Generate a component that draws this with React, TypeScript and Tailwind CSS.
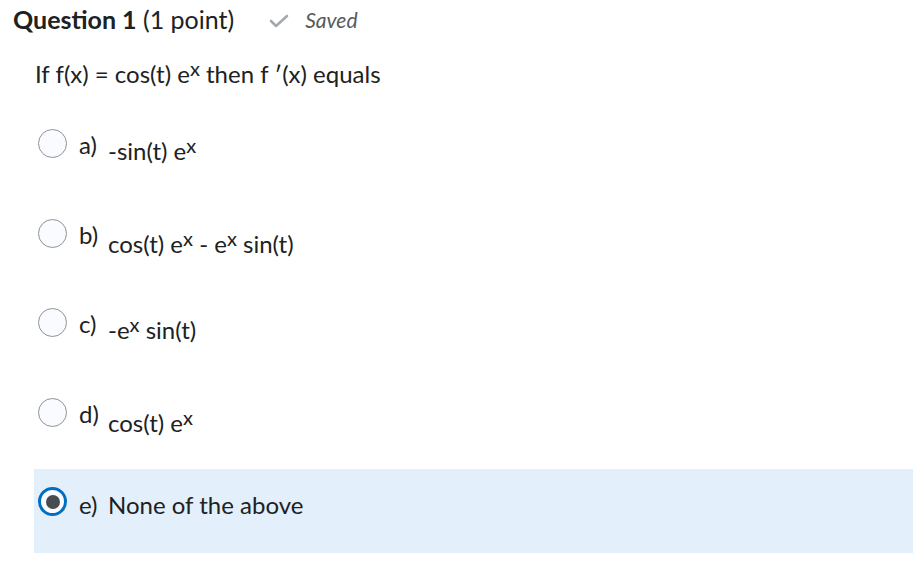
type Option = { key: string; label: string; body: React.ReactNode; lowered?: boolean };

// e raised to the x, sized and lifted like the quiz's inline math
const Ex = () => (
  <>
    e<sup className="text-[20px] leading-none align-baseline relative -top-[7px]">x</sup>
  </>
);

const options: Option[] = [
  { key: 'a', label: 'a)', body: <>-sin(t) <Ex /></> },
  { key: 'b', label: 'b)', body: <>cos(t) <Ex /> - <Ex /> sin(t)</>, lowered: true },
  { key: 'c', label: 'c)', body: <>-<Ex /> sin(t)</> },
  { key: 'd', label: 'd)', body: <>cos(t) <Ex /></>, lowered: true },
  { key: 'e', label: 'e)', body: <>None of the above</> },
];

function Radio({ checked }: { checked: boolean }) {
  if (checked) {
    return (
      <span className="w-[29px] h-[29px] rounded-full border-[3px] border-[#006fbf] bg-[#f9fbff] flex items-center justify-center shrink-0">
        <span className="w-[14px] h-[14px] rounded-full bg-[#494c4e]" />
      </span>
    );
  }
  return <span className="w-[29px] h-[29px] rounded-full border border-[#8e9396] bg-[#f9fbff] shrink-0" />;
}

export default function App() {
  const selected = 'e';
  return (
    <div className="w-[913px] h-[574px] bg-white text-[#202122] overflow-hidden" style={{ fontFamily: 'Lato, "Noto Sans", sans-serif' }}>
      {/* Header */}
      <div className="flex items-start pl-[13px] pt-[7px]">
        <h2 className="text-[25px] leading-none">
          <span className="font-bold">Question 1</span> (1 point)
        </h2>
        <svg width="20" height="14" viewBox="0 0 20 14" className="ml-[35px] mt-[7px] shrink-0">
          <polyline points="2,7 7,12 18,2" fill="none" stroke="#a3aaae" strokeWidth="2.6" strokeLinecap="round" strokeLinejoin="round" />
        </svg>
        <span className="ml-[16px] mt-[2px] text-[21px] leading-none italic text-[#565a5c]">Saved</span>
      </div>

      {/* Prompt */}
      <p className="pl-[35px] mt-[30px] text-[24px] leading-none">
        If f(x) = cos(t) <Ex /> then f ′(x) equals
      </p>

      {/* Options */}
      <div className="mt-[25px] ml-[34px]">
        {options.map((o) => {
          const isSel = o.key === selected;
          return (
            <div
              key={o.key}
              className={`flex items-start pt-[18px] pl-[4px] ${isSel ? 'bg-[#e3effb] h-[84px]' : 'h-[89.5px]'}`}
            >
              <Radio checked={isSel} />
              <span className={`ml-[12px] text-[24px] leading-none w-[29px] ${isSel ? 'mt-[6px]' : 'mt-[4px]'}`}>{o.label}</span>
              <span className={`text-[24px] leading-none ${isSel ? 'mt-[6px]' : o.lowered ? 'mt-[13px]' : 'mt-[10px]'}`}>{o.body}</span>
            </div>
          );
        })}
      </div>
    </div>
  );
}
